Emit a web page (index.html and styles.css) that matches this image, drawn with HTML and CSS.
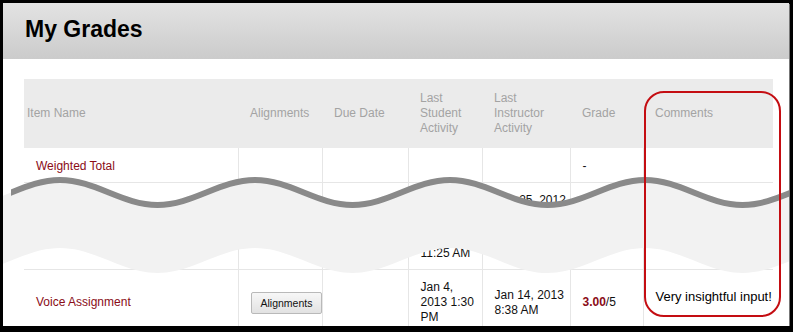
FILE: index.html
```html
<!DOCTYPE html>
<html lang="en">
<head>
  <meta charset="UTF-8">
  <title>My Grades</title>
  <link rel="stylesheet" href="styles.css">
</head>
<body>
  <div class="page">
    <div class="title-bar">
      <h1>My Grades</h1>
    </div>
    <div class="content">
      <table class="grades">
        <colgroup>
          <col style="width: 214px">
          <col style="width: 84px">
          <col style="width: 86px">
          <col style="width: 74px">
          <col style="width: 88px">
          <col style="width: 73px">
          <col style="width: 130px">
        </colgroup>
        <thead>
          <tr>
            <th class="first">Item Name</th>
            <th>Alignments</th>
            <th>Due Date</th>
            <th>Last Student Activity</th>
            <th>Last Instructor Activity</th>
            <th>Grade</th>
            <th>Comments</th>
          </tr>
        </thead>
        <tbody>
          <tr class="row-total">
            <td class="first"><a href="#">Weighted Total</a></td>
            <td></td>
            <td></td>
            <td></td>
            <td></td>
            <td>-</td>
            <td></td>
          </tr>
          <tr class="row-mid">
            <td class="first"><a href="#">Discussion Post</a></td>
            <td></td>
            <td></td>
            <td class="to-bottom">Dec 20, 2012 11:25 AM</td>
            <td class="to-top">Dec 25, 2012 3:48 PM</td>
            <td></td>
            <td></td>
          </tr>
          <tr class="row-item">
            <td class="first"><a href="#">Voice Assignment</a></td>
            <td><button class="btn">Alignments</button></td>
            <td></td>
            <td>Jan 4, 2013 1:30 PM</td>
            <td>Jan 14, 2013 8:38 AM</td>
            <td><span class="score">3.00</span>/5</td>
            <td class="comment">Very insightful input!</td>
          </tr>
        </tbody>
      </table>
    </div>

    <!-- torn edge hiding the rows in between -->
    <svg class="tear" width="786" height="323" viewBox="3 3 786 323">
      <defs>
        <clipPath id="tear-clip">
          <rect x="11" y="0" width="800" height="340"></rect>
        </clipPath>
        <filter id="soft" x="-5%" y="-50%" width="110%" height="200%">
          <feGaussianBlur stdDeviation="0.7"></feGaussianBlur>
        </filter>
      </defs>
      <path class="tear-band" d="M -135 180 C -99.5 180 -73 205 -37.5 205 C -2 205 24.5 180 60 180 C 95.5 180 122 205 157.5 205 C 193 205 219.5 180 255 180 C 290.5 180 317 205 352.5 205 C 388 205 414.5 180 450 180 C 485.5 180 512 205 547.5 205 C 583 205 609.5 180 645 180 C 680.5 180 707 205 742.5 205 C 778 205 804.5 180 840 180 L 840 248 C 804.5 248 778 273 742.5 273 C 707 273 680.5 248 645 248 C 609.5 248 583 273 547.5 273 C 512 273 485.5 248 450 248 C 414.5 248 388 273 352.5 273 C 317 273 290.5 248 255 248 C 219.5 248 193 273 157.5 273 C 122 273 95.5 248 60 248 C 24.5 248 -2 273 -37.5 273 C -73 273 -99.5 248 -135 248 Z"></path>
      <g clip-path="url(#tear-clip)">
        <path class="tear-edge" filter="url(#soft)" d="M -135 180 C -99.5 180 -73 205 -37.5 205 C -2 205 24.5 180 60 180 C 95.5 180 122 205 157.5 205 C 193 205 219.5 180 255 180 C 290.5 180 317 205 352.5 205 C 388 205 414.5 180 450 180 C 485.5 180 512 205 547.5 205 C 583 205 609.5 180 645 180 C 680.5 180 707 205 742.5 205 C 778 205 804.5 180 840 180"></path>
      </g>
    </svg>

    <div class="callout"></div>
  </div>
</body>
</html>
```

FILE: styles.css
```css
body {
  margin: 0;
  padding: 0;
  background: #000;
  font-family: 'Liberation Sans', Arial, sans-serif;
}
.page {
  position: relative;
  width: 786px;
  height: 323px;
  margin: 3px 0 0 3px;
  background: #fff;
  overflow: hidden;
  box-shadow: 1px 1px 0 #777;
}
.title-bar {
  height: 56px;
  box-sizing: border-box;
  padding: 13px 0 0 22px;
  background: linear-gradient(#e3e3e3, #cbcbcb);
}
.title-bar h1 {
  margin: 0;
  font-size: 23px;
  line-height: 26px;
  font-weight: bold;
  color: #000;
}
.content {
  padding: 20px 0 0 21px;
}
.grades {
  width: 749px;
  table-layout: fixed;
  border-collapse: collapse;
  font-size: 12px;
  line-height: 15px;
}
.grades th {
  height: 69px;
  padding: 0 2px 0 12px;
  background: #ebebeb;
  color: #a3a3a3;
  font-weight: normal;
  text-align: left;
  vertical-align: middle;
}
.grades th.first { padding-left: 3px; }
.grades td {
  padding: 0 2px 0 12px;
  color: #111;
  vertical-align: middle;
  border-left: 1px solid #e6e6e6;
}
.grades td.first { border-left: none; }
.grades tbody tr + tr td { border-top: 1px solid #e6e6e6; }
.grades a {
  color: #8a0c17;
  text-decoration: none;
}
.row-total { height: 34px; }
.row-total td { padding-top: 3px; }
.row-mid { height: 87px; }
.row-item { height: 67px; }
.grades td.to-bottom {
  vertical-align: bottom;
  padding-bottom: 8px;
}
.grades td.to-top {
  vertical-align: top;
  padding-top: 10px;
}
.grades td.comment {
  padding-right: 0;
  padding-bottom: 12px;
  font-size: 13px;
  color: #000;
  white-space: nowrap;
}
.score {
  font-weight: bold;
  color: #8a0c17;
}
.btn {
  height: 22px;
  padding: 0 9px;
  border: 1px solid #b9b9b9;
  border-radius: 2px;
  background: linear-gradient(#f7f7f7, #e2e2e2);
  font-family: 'Liberation Sans', Arial, sans-serif;
  font-size: 10.5px;
  color: #111;
}
.tear {
  position: absolute;
  left: 0;
  top: 0;
  pointer-events: none;
}
.tear-band { fill: #f2f2f2; }
.tear-edge {
  fill: none;
  stroke: #8a8a8a;
  stroke-width: 6;
}
.callout {
  position: absolute;
  left: 641px;
  top: 88px;
  width: 137px;
  height: 226px;
  box-sizing: border-box;
  border: 2px solid #c40d12;
  border-radius: 20px;
}
```
